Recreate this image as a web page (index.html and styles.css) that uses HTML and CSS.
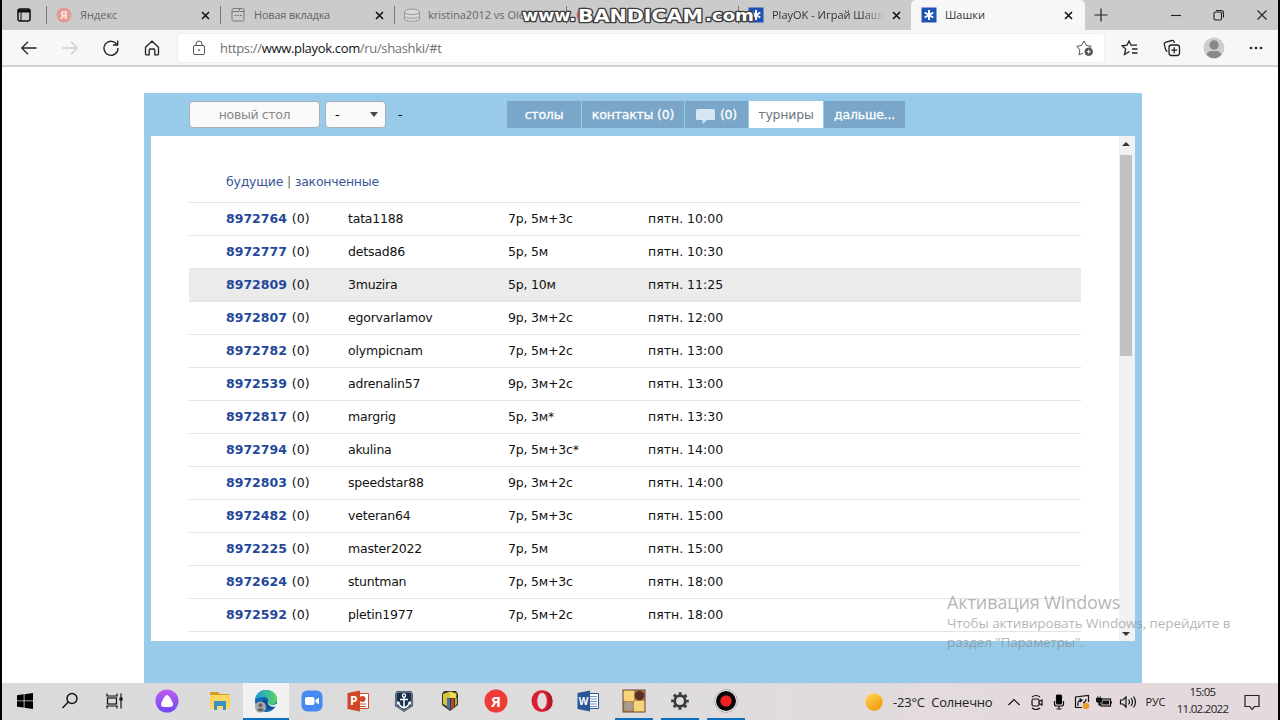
FILE: index.html
```html
<!DOCTYPE html>
<html lang="ru">
<head>
    <meta charset="UTF-8">
    <meta name="viewport" content="width=device-width, initial-scale=1.0">
    <title>Шашки</title>
    <link rel="stylesheet" href="styles.css">
</head>
<body>
    <div class="screen">
        <div class="tabbar">
            <div class="tab-menu">
                <svg width="14" height="14" viewBox="0 0 14 14"><rect x="1" y="1" width="12" height="12" rx="2" fill="none" stroke="#111" stroke-width="1.5"/><path d="M1 2h12v2H1z" fill="#111" stroke="#111"/><path d="M4 4v9" stroke="#111"/></svg>
            </div>
            <div class="tab">
                <svg class="favicon" width="16" height="16" viewBox="0 0 16 16"><circle cx="8" cy="8" r="7.500" fill="#e59a94"/><text x="8" y="12" text-anchor="middle" class="ya-tab">Я</text></svg>
                <span class="tab-title">Яндекс</span>
                <svg class="close" width="9" height="9" viewBox="0 0 9 9"><path d="M1 1l7 7M8 1l-7 7"/></svg>
            </div>
            <div class="tab">
                <svg class="favicon" width="16" height="16" viewBox="0 0 16 16" fill="none" stroke="#777"><rect x="2" y="1.500" width="12" height="12.500" rx="1.500"/><path d="M2 4.500h7l1-3M10 4.500h4M4.500 8.500h2M7.200 8.500h2M10 8.500h2"/></svg>
                <span class="tab-title new">Новая вкладка</span>
                <svg class="close" width="9" height="9" viewBox="0 0 9 9"><path d="M1 1l7 7M8 1l-7 7"/></svg>
            </div>
            <div class="tab narrow">
                <svg class="favicon" width="16" height="16" viewBox="0 0 16 16" fill="#d8d8d8" stroke="#999"><path d="M.5 8v4c0 3 15 3 15 0V8"/><path d="M.5 5v4c0 3 15 3 15 0V5"/><ellipse cx="8" cy="4.800" rx="7.500" ry="2.800"/></svg>
                <span class="tab-title">kristina2012 vs Oleg</span>
            </div>
            <div class="tab narrow">
                <svg class="favicon" width="16" height="16" viewBox="0 0 16 16"><circle cx="8" cy="8" r="7.500" fill="#e06a4c"/></svg>
            </div>
            <div class="tab dark">
                <svg class="favicon" width="16" height="16" viewBox="0 0 16 16"><path fill="#1c53b5" d="M.5.5h15v15H.5z"/><path d="M8 3v10M3.700 5.500l8.600 5M12.300 5.500l-8.600 5" stroke="#fff" stroke-width="2"/></svg>
                <span class="tab-title fade">PlayOK - Играй Шашк</span>
                <svg class="close" width="9" height="9" viewBox="0 0 9 9"><path d="M1 1l7 7M8 1l-7 7"/></svg>
            </div>
            <div class="tab active">
                <svg class="favicon" width="16" height="16" viewBox="0 0 16 16"><path fill="#1c53b5" d="M.5.5h15v15H.5z"/><path d="M8 3v10M3.700 5.500l8.600 5M12.300 5.500l-8.600 5" stroke="#fff" stroke-width="2"/></svg>
                <span class="tab-title">Шашки</span>
                <svg class="close" width="9" height="9" viewBox="0 0 9 9"><path d="M1 1l7 7M8 1l-7 7"/></svg>
            </div>
            <svg class="new-tab" width="14" height="14" viewBox="0 0 14 14" stroke="#222" stroke-width="1.200"><path d="M7 .5v13M.5 7h13"/></svg>
            <div class="window-buttons">
                <svg width="12" height="12" viewBox="0 0 12 12"><path d="M1 6.500h10"/></svg>
                <svg width="12" height="12" viewBox="0 0 12 12"><rect x="1" y="3" width="7.500" height="8" rx="1.500"/><path d="M3 1.500h5q2.500 0 2.500 2.500v4.500"/></svg>
                <svg width="12" height="12" viewBox="0 0 12 12"><path d="M1.500 1.500l9 9M10.500 1.500l-9 9"/></svg>
            </div>
        </div>

        <div class="toolbar">
            <div class="tool"><svg width="18" height="16" viewBox="0 0 18 16"><path d="M16.500 8H2M8 1.800L1.800 8 8 14.200"/></svg></div>
            <div class="tool off"><svg width="18" height="16" viewBox="0 0 18 16"><path d="M1.500 8H16M10 1.800L16.200 8 10 14.200"/></svg></div>
            <div class="tool"><svg width="18" height="18" viewBox="0 0 18 18"><path d="M15.200 6A7 7 0 1 0 16 9M15.700 1.500V6h-4.700"/></svg></div>
            <div class="tool"><svg width="18" height="18" viewBox="0 0 18 18"><path d="M2.500 8.200L9 2.200l6.500 6v6.800q0 .8-.8.800h-2.900V11q0-1-1-1H7.200q-1 0-1 1v4.800H3.300q-.8 0-.8-.8z"/></svg></div>
            <div class="address">
                <svg class="lock" width="14" height="16" viewBox="0 0 14 16"><rect x="1.500" y="5.500" width="11" height="9" rx="1.500"/><path d="M4 5.500V4q0-3 3-3t3 3v1.500"/><circle cx="7" cy="10" r=".6"/></svg>
                <span class="url">https://<b>www.playok.com</b>/ru/shashki/#t</span>
                <svg class="star" width="18" height="18" viewBox="0 0 18 18"><path d="M7 14l-4 1.800.8-5L.8 7.300l4.700-.8L8 2l2.300 4.500 5 .8-2 2"/><circle cx="12.700" cy="12.700" r="3.800" fill="#555"/><path d="M12.700 10.800v3.800M10.800 12.700h3.800" stroke="#fff"/></svg>
            </div>
            <div class="tools-right">
                <div class="tool"><svg width="18" height="18" viewBox="0 0 18 18"><path d="M8.500 12.500L3.500 15.500l1.200-5.400L1.300 6.800l4.700-.6L8 2l2 4.200h6M11 10h5.500M11 14h5.500"/></svg></div>
                <div class="tool"><svg width="18" height="18" viewBox="0 0 18 18"><rect x="6" y="6" width="10.500" height="10.500" rx="2.500"/><path d="M11.200 8.200v6M8.200 11.200h6M4.500 12.500Q3 12 2.600 10.500L1.300 5.300q-.4-1.500 1-2l6.500-1.800q1.500-.3 2.100 1l.6 1.600"/></svg></div>
                <div class="tool"><svg width="22" height="22" viewBox="0 0 22 22" class="avatar"><circle cx="11" cy="11" r="10.500" fill="#d0cecc"/><circle cx="11" cy="8" r="4.700" fill="#888"/><path d="M3.500 17.500q1.500-3.500 5-3.500h5q3.500 0 5 3.500-3 3.700-7.500 3.700t-7.500-3.700z" fill="#888"/></svg></div>
                <div class="tool"><svg width="14" height="4" viewBox="0 0 14 4" class="dots"><circle cx="2" cy="2" r="1.300"/><circle cx="7" cy="2" r="1.300"/><circle cx="12" cy="2" r="1.300"/></svg></div>
            </div>
        </div>

        <div class="page">
            <div class="game">
                <div class="game-head">
                    <div class="btn new-table">новый стол</div>
                    <div class="btn select"><span>-</span><i class="caret"></i></div>
                    <span class="dash">-</span>
                    <div class="menu">
                        <div class="menu-item tables">столы</div>
                        <div class="menu-item contacts">контакты (0)</div>
                        <div class="menu-item chat"><svg width="19" height="15" viewBox="0 0 19 15"><path fill="#d6e6f3" d="M1.500 0h16q1.500 0 1.500 1.500v8q0 1.500-1.500 1.500H11l-4.500 4V11h-5Q0 11 0 9.500v-8Q0 0 1.500 0z"/></svg>(0)</div>
                        <div class="menu-item events current">турниры</div>
                        <div class="menu-item more">дальше...</div>
                    </div>
                </div>
                <div class="panel">
                    <div class="list">
                        <div class="filter"><a>будущие</a> | <a>законченные</a></div>
                        <div class="row"><span><b>8972764</b> (0)</span><span>tata1188</span><span>7р, 5м+3с</span><span>пятн. 10:00</span></div>
                        <div class="row"><span><b>8972777</b> (0)</span><span>detsad86</span><span>5р, 5м</span><span>пятн. 10:30</span></div>
                        <div class="row hover"><span><b>8972809</b> (0)</span><span>3muzira</span><span>5р, 10м</span><span>пятн. 11:25</span></div>
                        <div class="row"><span><b>8972807</b> (0)</span><span>egorvarlamov</span><span>9р, 3м+2с</span><span>пятн. 12:00</span></div>
                        <div class="row"><span><b>8972782</b> (0)</span><span>olympicnam</span><span>7р, 5м+2с</span><span>пятн. 13:00</span></div>
                        <div class="row"><span><b>8972539</b> (0)</span><span>adrenalin57</span><span>9р, 3м+2с</span><span>пятн. 13:00</span></div>
                        <div class="row"><span><b>8972817</b> (0)</span><span>margrig</span><span>5р, 3м*</span><span>пятн. 13:30</span></div>
                        <div class="row"><span><b>8972794</b> (0)</span><span>akulina</span><span>7р, 5м+3с*</span><span>пятн. 14:00</span></div>
                        <div class="row"><span><b>8972803</b> (0)</span><span>speedstar88</span><span>9р, 3м+2с</span><span>пятн. 14:00</span></div>
                        <div class="row"><span><b>8972482</b> (0)</span><span>veteran64</span><span>7р, 5м+3с</span><span>пятн. 15:00</span></div>
                        <div class="row"><span><b>8972225</b> (0)</span><span>master2022</span><span>7р, 5м</span><span>пятн. 15:00</span></div>
                        <div class="row"><span><b>8972624</b> (0)</span><span>stuntman</span><span>7р, 5м+3с</span><span>пятн. 18:00</span></div>
                        <div class="row last"><span><b>8972592</b> (0)</span><span>pletin1977</span><span>7р, 5м+2с</span><span>пятн. 18:00</span></div>
                    </div>
                    <div class="scrollbar">
                        <i class="arrow up"></i>
                        <div class="thumb"></div>
                        <i class="arrow down"></i>
                    </div>
                </div>
            </div>
        </div>

        <div class="taskbar">
            <div class="task start"><svg width="16" height="16" viewBox="0 0 16 16"><path d="M0 2.300l6.700-1v6.200H0zM7.500 1.200L16 0v7.500H7.500zM0 8.300h6.700v6.300L0 13.700zM7.500 8.300H16V16l-8.500-1.200z"/></svg></div>
            <div class="task search"><svg width="18" height="18" viewBox="0 0 18 18" fill="none" stroke="#111" stroke-width="1.400"><circle cx="11" cy="6.500" r="5"/><path d="M7.300 10L1.500 16"/></svg></div>
            <div class="task view"><svg width="17" height="16" viewBox="0 0 17 16" fill="none" stroke="#111" stroke-width="1.200"><path d="M1 .5v2.500h10V.5M1 15.500V13h10v2.500M15 .5v15"/><rect x="1.500" y="5" width="9" height="6"/><path d="M14 5h2v2h-2z" fill="#111"/></svg></div>
            <div class="task alice"><svg width="24" height="24" viewBox="0 0 24 24"><defs><linearGradient id="alice" x2="0" y2="1"><stop stop-color="#c05cf4"/><stop offset="1" stop-color="#6c4af2"/></linearGradient></defs><circle cx="12" cy="12" r="11.500" fill="url(#alice)"/><path d="M12 6c2 0 6 7 6 9.500S15.500 18 12 18s-6 0-6-2.500S10 6 12 6z" fill="#fff"/></svg></div>
            <div class="task"><svg width="20" height="18" viewBox="0 0 20 18"><path d="M0 0h8l2 2h9v4H0z" fill="#d69b22"/><path d="M0 3h20v14H0z" fill="#fbd660"/><path d="M4 9h12v9h-3v-4H7v4H4z" fill="#3c8fc4"/></svg></div>
            <div class="task open"><svg width="24" height="24" viewBox="0 0 24 24"><defs><linearGradient id="edge"><stop stop-color="#1b9de0"/><stop offset="1" stop-color="#58d45f"/></linearGradient></defs><circle cx="12" cy="12" r="11" fill="#1267b5"/><path d="M1 11C2 4 7 1 12 1c7 0 11 4 11 9 0 4-3 6-6 6-3 0-4-1-3-3 1-3-1-5-4-5-4 0-8 1-9 3z" fill="url(#edge)"/><path d="M9 11c-2 5 2 9 7 9 2 0 4-1 5-2-4 1-8-1-8-5 0-2-2-3-4-2z" fill="#0d4c8e"/><path d="M14 13c1 4 6 4 10 1l-1 3c-4 2-9 0-9-4z" fill="#f0f0f0"/><circle cx="6.500" cy="18" r="5.500" fill="#a9a9a9"/><circle cx="6.500" cy="16.300" r="2" fill="#666"/><path d="M3 21q3.500-4 7 0-3.500 3-7 0z" fill="#666"/></svg></div>
            <div class="task"><svg width="22" height="22" viewBox="0 0 22 22"><rect x=".5" y=".5" width="21" height="21" rx="6" fill="#4589f5"/><rect x="4" y="7" width="9.500" height="8" rx="2" fill="#fff"/><path d="M14.500 10l3.500-2.500v7L14.500 12z" fill="#fff"/></svg></div>
            <div class="task"><svg width="22" height="22" viewBox="0 0 22 22"><path d="M11 3.500h10.500v15H11z" fill="#fff" stroke="#d2492a"/><circle cx="15.500" cy="9" r="3" fill="#d2492a"/><path d="M12 14h7M12 16.500h7" stroke="#d2492a"/><path d="M.5 3L13 .5v21L.5 19z" fill="#d04727"/><text x="3" y="15" class="office">P</text></svg></div>
            <div class="task"><svg width="20" height="22" viewBox="0 0 20 22"><path d="M3 1h14l2 3v12l-9 6-9-6V4z" fill="#182f49"/><path d="M3.500 2h13l1.500 2.500v11L10 21l-8-5.500v-11z" fill="none" stroke="#b9c5d0" stroke-width=".8"/><circle cx="10" cy="5.500" r="1.600" fill="none" stroke="#fff" stroke-width="1.300"/><path d="M10 7v11M6 9.500h8M4 12c1 4 3 5 6 6 3-1 5-2 6-6M3.500 14.500L4 12l2 1.500M16.500 14.500L16 12l-2 1.500" fill="none" stroke="#fff" stroke-width="1.500"/></svg></div>
            <div class="task"><svg width="18" height="22" viewBox="0 0 18 22"><path d="M3 1h12l2 3v11l-8 6-8-6V4z" fill="#3b3a29"/><path d="M2 4l7-2.500V8H6v8l-4-2z" fill="#d9c442"/><path d="M9 1.500l6.500 2L15 8H9z" fill="#f2da54"/><path d="M6 8.500h3v11l-3-2z" fill="#3c78aa"/><path d="M10 8.500h3V17l-3 2.500z" fill="#b14b2b"/><path d="M14 8h2v6l-2 2z" fill="#bdac46"/></svg></div>
            <div class="task"><svg width="24" height="24" viewBox="0 0 24 24"><circle cx="12" cy="12" r="11.500" fill="#ef3b36"/><text x="12" y="17.500" text-anchor="middle" class="ya-task">Я</text></svg></div>
            <div class="task"><svg width="22" height="22" viewBox="0 0 22 22"><ellipse cx="11" cy="11" rx="10.500" ry="10.800" fill="#d91f30"/><path d="M14 1q7 2 7.500 10T14 21q4-3 4-10T14 1z" fill="#a9172a"/><ellipse cx="11" cy="11" rx="4.800" ry="8.300" fill="#e0dcde"/></svg></div>
            <div class="task"><svg width="22" height="22" viewBox="0 0 22 22"><path d="M11 3.500h10.500v15H11z" fill="#fff" stroke="#2a5699"/><path d="M13 6.500h7M13 9h7M13 11.500h7M13 14h7M13 16.500h7" stroke="#7794bd"/><path d="M.5 3L13 .5v21L.5 19z" fill="#2a5699"/><text x="1.800" y="14.500" class="office word">W</text></svg></div>
            <div class="task running"><svg width="24" height="24" viewBox="0 0 24 24"><path d="M.5.5h23v23H.5z" fill="#6a432b"/><path d="M1.500 1.500H12V12H1.500zM12 12h10.500v10.500H12z" fill="#f6d57a"/><path d="M12 1.500h10.500V12H12zM1.500 12H12v10.500H1.500z" fill="#b98552"/><circle cx="17.500" cy="6.500" r="4.800" fill="#573224"/><circle cx="6.700" cy="17.300" r="4.800" fill="#a79a8f"/></svg></div>
            <div class="task running"><svg width="20" height="20" viewBox="0 0 20 20" fill="none" stroke="#3a3a3a"><circle cx="10" cy="10" r="5.300" stroke-width="2.800"/><circle cx="10" cy="10" r="7.500" stroke-width="2.600" stroke-dasharray="2.900 2.990" stroke-dashoffset="1.450"/></svg></div>
            <div class="task running"><svg width="24" height="24" viewBox="0 0 24 24"><circle cx="12" cy="12" r="11.300" fill="#fff" stroke="#888" stroke-width=".7"/><circle cx="12" cy="12" r="10" fill="#050505"/><circle cx="12" cy="12" r="5.700" fill="#ee2222"/></svg></div>
            <div class="tray">
                <svg class="sun" width="18" height="18" viewBox="0 0 18 18"><defs><linearGradient id="sun" x2=".7" y2="1"><stop stop-color="#ffd956"/><stop offset="1" stop-color="#f49a0b"/></linearGradient></defs><circle cx="9" cy="9" r="8.700" fill="url(#sun)"/></svg>
                <span class="weather">-23°C&nbsp; Солнечно</span>
                <div class="tray-icons">
                    <svg width="16" height="16" viewBox="0 0 16 16"><path d="M2.500 11L8 5.500l5.500 5.500"/></svg>
                    <svg width="16" height="16" viewBox="0 0 16 16"><rect x="3" y="5" width="7" height="7" rx="1.500"/><path d="M10 7.500l3-1.500v5l-3-1.500M3 3q4-3 8 0M3 14q4 3 8 0"/></svg>
                    <svg width="16" height="16" viewBox="0 0 16 16"><rect x="5.500" y="1" width="5" height="9" rx="1" fill="#000"/><path d="M3.500 7v3q0 2 2 2h5q2 0 2-2V7M8 12v3M5.500 15h5"/></svg>
                    <svg width="16" height="16" viewBox="0 0 16 16"><path d="M8 13.500H1.500V3l13-1.500V8M4 12q-1-5 3-6M5.500 4.500L8 6 6 8M12 5q0 3-3 4"/><circle cx="12" cy="12" r="3.200" fill="#e99a28" stroke="none"/></svg>
                    <svg width="16" height="16" viewBox="0 0 16 16"><rect x="5" y="5" width="9.500" height="7"/><path d="M7 7h5.500v3H7zM15.500 7.500v2" fill="#111"/><path d="M.5 4.500h5v2q0 1.500-2.500 2-2.500-.5-2.500-2zM1.800 2.500v2M4.200 2.500v2M3 8v3h2" fill="#111"/></svg>
                    <svg width="18" height="16" viewBox="0 0 18 16"><path d="M1.500 6h2.500l3-3v10l-3-3H1.500zM9.500 5.500q2 2.500 0 5M12 4q3 4 0 8M14.500 2.500q4 5.500 0 11"/></svg>
                </div>
                <span class="lang">РУС</span>
                <div class="clock"><span>15:05</span><span>11.02.2022</span></div>
                <svg class="notice" width="16" height="16" viewBox="0 0 16 16"><path d="M1 1.500h14v11h-4.500L8 15.500 6 12.500H1z"/></svg>
            </div>
        </div>

        <!-- overlays on top of the desktop -->
        <svg class="bandicam" width="240" height="30" viewBox="0 0 240 30">
            <text x="6" y="21" font-size="16" textLength="54" lengthAdjust="spacingAndGlyphs">www.</text>
            <text x="62" y="21.500" font-size="18" textLength="125" lengthAdjust="spacingAndGlyphs">BANDICAM</text>
            <text x="189" y="21" font-size="16" textLength="49" lengthAdjust="spacingAndGlyphs">.com</text>
        </svg>
        <div class="activation">
            <div class="activation-title">Активация Windows</div>
            <div class="activation-text">Чтобы активировать Windows, перейдите в<br>раздел "Параметры".</div>
        </div>
    </div>
</body>
</html>
```
FILE: styles.css
```css
* {
    box-sizing: border-box;
}
body {
    margin: 0;
    background-color: #000;
    font-family: "Open Sans", "Noto Sans", sans-serif;
}
svg {
    flex-shrink: 0;
}
.screen {
    position: relative;
    display: flex;
    flex-direction: column;
    width: 1276px;
    height: 720px;
    margin-left: 2px;
    background-color: #fff;
    overflow: hidden;
}

/* tabs */
.tabbar {
    display: flex;
    align-items: center;
    height: 30px;
    background-color: #cbcbcb;
}
.tab-menu {
    display: flex;
    width: 44px;
    padding-left: 15px;
}
.tab {
    display: flex;
    align-items: center;
    width: 174px;
    height: 18px;
    padding: 0 10px 0 9px;
    border-left: 1px solid #777;
    font-size: 11px;
    color: #666;
}
.tab.narrow {
    width: 172px;
}
.tab.dark {
    width: 173px;
    color: #333;
}
.tab.active {
    width: 174px;
    height: 30px;
    padding: 0 12px 0 10px;
    border-left: 0;
    border-radius: 5px 5px 0 0;
    background-color: #f7f7f7;
    color: #333;
}
.tab-title {
    margin: -2px 0 0 8px;
    white-space: nowrap;
    overflow: hidden;
}
.new {
    letter-spacing: -0.2px;
}
.fade {
    width: 113px;
    -webkit-mask-image: linear-gradient(to right, #000 80%, transparent);
    mask-image: linear-gradient(to right, #000 80%, transparent);
}
.close {
    margin-left: auto;
    stroke: #111;
    stroke-width: 1.6;
}
.new-tab {
    margin-left: 9px;
}
.window-buttons {
    display: flex;
    gap: 31px;
    margin-left: auto;
    margin-right: 10px;
    fill: none;
    stroke: #222;
    stroke-width: 1.1;
}
.ya-tab {
    font: bold 11px "Open Sans", sans-serif;
    fill: #f8e5e2;
}

/* toolbar */
.toolbar {
    display: flex;
    align-items: center;
    height: 37px;
    padding-left: 6px;
    background-color: #f7f7f7;
    border-bottom: 2px solid #cfcfcf;
}
.tool {
    display: flex;
    justify-content: center;
    align-items: center;
    width: 41px;
    fill: none;
    stroke: #222;
    stroke-width: 1.3;
}
.tool.off {
    stroke: #ccc;
}
.avatar {
    stroke: none;
}
.dots {
    fill: #222;
    stroke: none;
}
.address {
    display: flex;
    align-items: center;
    width: 926px;
    height: 28px;
    margin-left: 6px;
    padding: 0 10px 0 14px;
    border-radius: 3px;
    background-color: #fff;
    box-shadow: 0 0 2px #ddd;
    fill: none;
    stroke: #555;
}
.url {
    margin-left: 14px;
    font-size: 13px;
    letter-spacing: -0.33px;
    color: #707070;
}
.url b {
    font-weight: normal;
    color: #111;
}
.star {
    margin-left: auto;
}
.tools-right {
    display: flex;
    margin-left: 5px;
}
.tools-right .tool {
    width: 42px;
}

/* game page */
.page {
    height: 616px;
    padding: 26px 0 0 142px;
}
.game {
    width: 998px;
    height: 590px;
    padding: 0 7px;
    background-color: #98caea;
    font-family: "DejaVu Sans", Verdana, sans-serif;
    font-size: 12.5px;
}
.game-head {
    display: flex;
    align-items: center;
    height: 43px;
    padding-left: 38px;
}
.btn {
    height: 27px;
    border: 1px solid #a9b0b5;
    border-radius: 4px;
    background-color: #f9f9f9;
    line-height: 26px;
}
.new-table {
    width: 131px;
    text-align: center;
    letter-spacing: -0.35px;
    color: #888;
}
.select {
    display: flex;
    align-items: center;
    justify-content: space-between;
    width: 61px;
    margin-left: 5px;
    padding: 0 7px 0 9px;
}
.caret {
    border: 4px solid transparent;
    border-top: 5px solid #444;
    border-bottom: 0;
}
.dash {
    width: 7px;
    margin-left: 12px;
}
.menu {
    display: flex;
    gap: 1px;
    margin-left: 102px;
}
.menu-item {
    display: flex;
    justify-content: center;
    align-items: center;
    height: 27px;
    background-color: #79a6c9;
    letter-spacing: -0.2px;
    color: #fff;
    -webkit-text-stroke: 0.3px #fff;
}
.tables {
    width: 74px;
}
.contacts {
    width: 102px;
}
.chat {
    width: 63px;
    gap: 5px;
}
.chat svg {
    margin-top: 3px;
}
.events {
    width: 74px;
}
.more {
    width: 81px;
}
.current {
    background-color: #fff;
    color: #6d7780;
    -webkit-text-stroke: 0;
}
.panel {
    display: flex;
    justify-content: space-between;
    height: 505px;
    padding-left: 38px;
    background-color: #fff;
}
.list {
    width: 892px;
}
.filter {
    height: 66px;
    padding: 38px 0 0 37px;
    line-height: 15px;
    letter-spacing: -0.22px;
    color: #68703a;
}
.filter a {
    color: #3a5795;
}
.row {
    display: grid;
    grid-template-columns: 122px 160px 140px auto;
    height: 33px;
    padding-left: 37px;
    border-top: 1px solid #e4e4e4;
    line-height: 32px;
    letter-spacing: -0.2px;
    color: #111;
}
.row span:first-child,
.row span:last-child {
    letter-spacing: 0;
}
.row b {
    margin-right: 1px;
    color: #23489a;
}
.row.hover {
    background-color: #ebebeb;
}
.row.last {
    height: 34px;
    border-bottom: 1px solid #e4e4e4;
}
.scrollbar {
    display: flex;
    flex-direction: column;
    align-items: center;
    width: 16px;
    padding: 6px 2px 5px 0;
    background-color: #f1f1f1;
}
.thumb {
    width: 12px;
    height: 201px;
    margin-top: 9px;
    background-color: #c1c1c1;
}
.arrow {
    border: 4px solid transparent;
}
.up {
    border-top: 0;
    border-bottom-color: #333;
}
.down {
    margin-top: auto;
    border-bottom: 0;
    border-top-color: #333;
}

/* windows taskbar */
.taskbar {
    display: flex;
    height: 37px;
    background: linear-gradient(to right, #dadada, #dedcdd 50%, #e4dadd 80%);
}
.task {
    display: flex;
    justify-content: center;
    align-items: center;
    width: 46px;
    border-bottom: 2px solid transparent;
}
.search, .view {
    width: 44px;
}
.alice {
    width: 61px;
}
.task.open {
    background-color: #f1f1f1;
    border-bottom-color: #0b70bd;
}
.running {
    width: 38px;
    margin: 0 4px;
    border-bottom-color: #0b70bd;
}
.office {
    font: bold 12px "Open Sans", sans-serif;
    fill: #fff;
}
.office.word {
    font-size: 10px;
}
.ya-task {
    font: bold 15px "Open Sans", sans-serif;
    fill: #fff;
}
.tray {
    display: flex;
    align-items: center;
    margin-left: auto;
    width: 413px;
    font-size: 12px;
    color: #222;
}
.weather {
    width: 103px;
    margin-left: 10px;
    font-size: 13px;
    letter-spacing: -0.2px;
    white-space: nowrap;
}
.tray-icons {
    display: flex;
    gap: 6.5px;
    margin-left: 10px;
    fill: none;
    stroke: #111;
    stroke-width: 1.2;
}
.lang {
    width: 21px;
    margin-left: 9px;
    font-size: 11px;
    letter-spacing: -0.2px;
}
.clock {
    display: flex;
    flex-direction: column;
    align-items: center;
    width: 56px;
    margin: -3px 0 0 8px;
    font-size: 11.5px;
    line-height: 17px;
    letter-spacing: -0.7px;
}
.notice {
    margin-left: 13px;
    fill: none;
    stroke: #222;
    stroke-width: 1.2;
}

/* overlays */
.bandicam {
    position: absolute;
    left: 514px;
    top: 0;
    font-family: "DejaVu Sans", sans-serif;
    font-weight: bold;
    fill: #fff;
    stroke: #3c3c3c;
    stroke-width: 2.6px;
    stroke-linejoin: round;
    paint-order: stroke;
}
.activation {
    position: absolute;
    left: 945px;
    top: 590px;
    color: rgba(130, 130, 130, 0.6);
    white-space: nowrap;
}
.activation-title {
    font-size: 18px;
    line-height: 24px;
    letter-spacing: -0.1px;
}
.activation-text {
    font-size: 13.5px;
    line-height: 19px;
    letter-spacing: -0.1px;
}
```
